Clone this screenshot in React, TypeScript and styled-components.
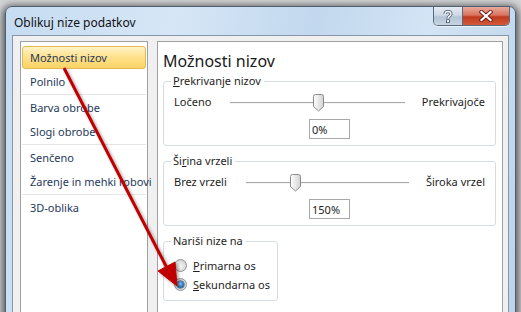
import React from 'react'
import styled, { createGlobalStyle } from 'styled-components'

const GlobalStyle = createGlobalStyle`
  html, body {
    margin: 0;
    padding: 0;
    width: 521px;
    height: 312px;
    overflow: hidden;
    background: #d2d4d6;
  }
  body {
    font-family: "Noto Sans", "Open Sans", sans-serif;
    font-size: 11px;
    color: #1e1e1e;
  }
`

const Stage = styled.div`
  position: relative;
  width: 521px;
  height: 312px;
  overflow: hidden;
  padding: 6px 0 0 5px;
  box-sizing: border-box;
`

const Window = styled.div`
  width: 511px;
  height: 340px;
  box-sizing: border-box;
  border: 1px solid #4f5f72;
  border-radius: 7px 7px 0 0;
  background: linear-gradient(100deg, #c6dcf2 0%, #d6e6f6 30%, #c2d8ee 55%, #d3e4f5 75%, #bcd3ea 100%);
  box-shadow: 0 2px 7px 3px rgba(0, 0, 0, 0.55);
  padding: 0 6px;
  display: flex;
  flex-direction: column;
`

const TitleBar = styled.div`
  height: 28px;
  display: flex;
  align-items: flex-start;
  flex-shrink: 0;
`

const Title = styled.div`
  font-size: 12px;
  color: #111;
  margin: 7px 0 0 2px;
`

const CaptionButtons = styled.div`
  margin-left: auto;
  margin-right: -1px;
  display: flex;
  border: 1px solid #5b6b7d;
  border-top: none;
  border-radius: 0 0 5px 5px;
  overflow: hidden;
  box-shadow: 0 1px 0 rgba(255, 255, 255, 0.6);
`

const CaptionButton = styled.div<{ $close?: boolean }>`
  width: ${p => (p.$close ? 46 : 28)}px;
  height: 18px;
  display: flex;
  align-items: center;
  justify-content: center;
  background: ${p =>
    p.$close
      ? 'linear-gradient(#e9a99c 0%, #d9745f 45%, #c0391f 55%, #d25a3c 100%)'
      : 'linear-gradient(#e4ecf4 0%, #cdd9e6 45%, #b3c4d6 55%, #c6d4e2 100%)'};
  & + & {
    border-left: 1px solid #5b6b7d;
  }
`

const Client = styled.div`
  flex: 1;
  border: 1px solid #8796a8;
  border-bottom: none;
  background: #f0f0f0;
  padding: 5px 5px 0 7px;
  display: flex;
  gap: 9px;
`

const NavList = styled.div`
  width: 128px;
  box-sizing: border-box;
  background: #fff;
  border: 1px solid #a0a0a0;
  border-bottom: none;
  padding-top: 3px;
`

const NavItem = styled.div<{ $selected?: boolean }>`
  height: 23px;
  margin: 1px 1px;
  padding-left: 7px;
  display: flex;
  align-items: center;
  font-size: 11px;
  color: #1e395b;
  white-space: nowrap;
  box-sizing: border-box;
  border-radius: 3px;
  border: 1px solid ${p => (p.$selected ? '#e0b954' : 'transparent')};
  background: ${p =>
    p.$selected ? 'linear-gradient(#fff3c8 0%, #ffe08a 50%, #fcd465 100%)' : 'transparent'};
`

const NavSeparator = styled.div`
  height: 1px;
  margin: 1px 1px 0;
  background: #e5e5e5;
`

const Content = styled.div`
  width: 346px;
  box-sizing: border-box;
  background: #fff;
  border: 1px solid #a0a0a0;
  border-bottom: none;
  padding: 0 6px 0 5px;
`

const Heading = styled.h1`
  margin: 0;
  padding-top: 7px;
  font-size: 16px;
  font-weight: 400;
  line-height: 24px;
  color: #1a1a1a;
`

const Group = styled.fieldset<{ $width?: number }>`
  margin: 7px 0 0;
  padding: 2px 10px 6px;
  border: 1px solid #d5dde3;
  border-radius: 3px;
  box-sizing: border-box;
  width: ${p => (p.$width ? `${p.$width}px` : 'auto')};
  min-inline-size: 0;
  white-space: nowrap;
  &:first-of-type {
    margin-top: 0;
  }
`

const Legend = styled.legend`
  padding: 0 3px 0 2px;
  margin-left: -3px;
  font-size: 11px;
  line-height: 16px;
`

const Key = styled.span`
  text-decoration: underline;
`

const SliderRow = styled.div`
  display: flex;
  align-items: center;
  height: 20px;
`

const SliderLabel = styled.span`
  white-space: nowrap;
`

const Track = styled.div`
  position: relative;
  flex: 1;
  height: 2px;
  margin: 3px 17px 0 19px;
  border-top: 1px solid #a8a8a8;
  border-bottom: 1px solid #f4f4f4;
  box-sizing: border-box;
`

const Thumb = styled.svg`
  position: absolute;
  top: -9px;
  width: 11px;
  height: 18px;
  margin-left: -5px;
`

const ValueBox = styled.div`
  width: 41px;
  height: 20px;
  box-sizing: border-box;
  margin: 8px auto 0;
  border: 1px solid #a6a8ad;
  padding-left: 2px;
  display: flex;
  align-items: center;
  background: #fff;
`

const RadioRow = styled.div`
  display: flex;
  align-items: center;
  height: 19px;
  gap: 6px;
  white-space: nowrap;
  &:first-of-type {
    margin-top: 5px;
  }
`

const RadioCircle = styled.span<{ $checked?: boolean }>`
  flex-shrink: 0;
  width: 13px;
  height: 13px;
  box-sizing: border-box;
  border-radius: 50%;
  border: 1px solid #8f9196;
  background: radial-gradient(circle at 50% 55%, #f6f6f6 0%, #dcdcdc 55%, #c8c8c8 100%);
  display: flex;
  align-items: center;
  justify-content: center;
  &::after {
    content: '';
    width: 7px;
    height: 7px;
    border-radius: 50%;
    display: ${p => (p.$checked ? 'block' : 'none')};
    background: radial-gradient(circle at 45% 40%, #8fd0f5 0%, #2f7fc0 50%, #0f3f78 100%);
    box-shadow: 0 0 0 0.5px #1b4670;
  }
`

const ArrowLayer = styled.svg`
  position: absolute;
  inset: 0;
  pointer-events: none;
`

type SliderProps = { left: string; right: React.ReactNode; min: number; max: number; value: number }

const Slider = ({ left, right, min, max, value }: SliderProps) => {
  const pct = ((value - min) / (max - min)) * 100
  return (
    <SliderRow>
      <SliderLabel>{left}</SliderLabel>
      <Track>
        <Thumb viewBox="0 0 11 18" style={{ left: `${pct}%` }}>
          <defs>
            <linearGradient id="thumbFill" x1="0" y1="0" x2="1" y2="0">
              <stop offset="0" stopColor="#ffffff" />
              <stop offset="1" stopColor="#d2d2d2" />
            </linearGradient>
          </defs>
          <path
            d="M0.5 2.5 Q0.5 0.5 2.5 0.5 H8.5 Q10.5 0.5 10.5 2.5 V12.5 L5.5 17 L0.5 12.5 Z"
            fill="url(#thumbFill)"
            stroke="#8a8a8a"
          />
        </Thumb>
      </Track>
      <SliderLabel>{right}</SliderLabel>
    </SliderRow>
  )
}

const navGroups = [
  ['Možnosti nizov', 'Polnilo'],
  ['Barva obrobe', 'Slogi obrobe'],
  ['Senčeno', 'Žarenje in mehki robovi'],
  ['3D-oblika'],
]

export default function App() {
  return (
    <Stage>
      <GlobalStyle />
      <Window>
        <TitleBar>
          <Title>Oblikuj nize podatkov</Title>
          <CaptionButtons>
            <CaptionButton>
              <svg width="10" height="13" viewBox="0 0 10 13">
                <path
                  d="M2 4 Q2 1.5 5 1.5 Q8 1.5 8 4 Q8 5.5 6 6.5 Q5 7 5 8.5"
                  fill="none"
                  stroke="#47566a"
                  strokeWidth="3"
                />
                <path
                  d="M2 4 Q2 1.5 5 1.5 Q8 1.5 8 4 Q8 5.5 6 6.5 Q5 7 5 8.5"
                  fill="none"
                  stroke="#fff"
                  strokeWidth="1.4"
                />
                <rect x="3.5" y="9.8" width="3" height="2.8" fill="#fff" stroke="#47566a" strokeWidth="0.8" />
              </svg>
            </CaptionButton>
            <CaptionButton $close>
              <svg width="14" height="12" viewBox="0 0 14 12">
                <path d="M2.5 2 L11.5 10 M11.5 2 L2.5 10" stroke="#6b1f12" strokeWidth="4" strokeLinecap="square" />
                <path d="M2.5 2 L11.5 10 M11.5 2 L2.5 10" stroke="#fff" strokeWidth="2.2" strokeLinecap="square" />
              </svg>
            </CaptionButton>
          </CaptionButtons>
        </TitleBar>
        <Client>
          <NavList>
            {navGroups.map((group, gi) => (
              <React.Fragment key={gi}>
                {gi > 0 && <NavSeparator />}
                {group.map(item => (
                  <NavItem key={item} $selected={item === 'Možnosti nizov'}>
                    {item}
                  </NavItem>
                ))}
              </React.Fragment>
            ))}
          </NavList>
          <Content>
            <Heading>Možnosti nizov</Heading>
            <Group>
              <Legend>
                <Key>P</Key>rekrivanje nizov
              </Legend>
              <Slider left="Ločeno" right="Prekrivajoče" min={-100} max={100} value={0} />
              <ValueBox>0%</ValueBox>
            </Group>
            <Group>
              <Legend>
                Ši<Key>r</Key>ina vrzeli
              </Legend>
              <Slider left="Brez vrzeli" right="Široka vrzel" min={0} max={500} value={150} />
              <ValueBox>150%</ValueBox>
            </Group>
            <Group $width={115}>
              <Legend>Nariši nize na</Legend>
              <RadioRow>
                <RadioCircle />
                <span>
                  <Key>P</Key>rimarna os
                </span>
              </RadioRow>
              <RadioRow>
                <RadioCircle $checked />
                <span>
                  <Key>S</Key>ekundarna os
                </span>
              </RadioRow>
            </Group>
          </Content>
        </Client>
      </Window>
      <ArrowLayer width="521" height="312" viewBox="0 0 521 312">
        <defs>
          <filter id="arrowShadow" x="-20%" y="-20%" width="140%" height="140%">
            <feDropShadow dx="2" dy="2" stdDeviation="1.5" floodColor="#000" floodOpacity="0.35" />
          </filter>
        </defs>
        <g filter="url(#arrowShadow)" fill="#c00000" stroke="#c00000">
          <line x1="64" y1="68" x2="167" y2="268" strokeWidth="3" />
          <polygon points="177,286 158,271 175,262" strokeWidth="1" strokeLinejoin="round" />
        </g>
      </ArrowLayer>
    </Stage>
  )
}
